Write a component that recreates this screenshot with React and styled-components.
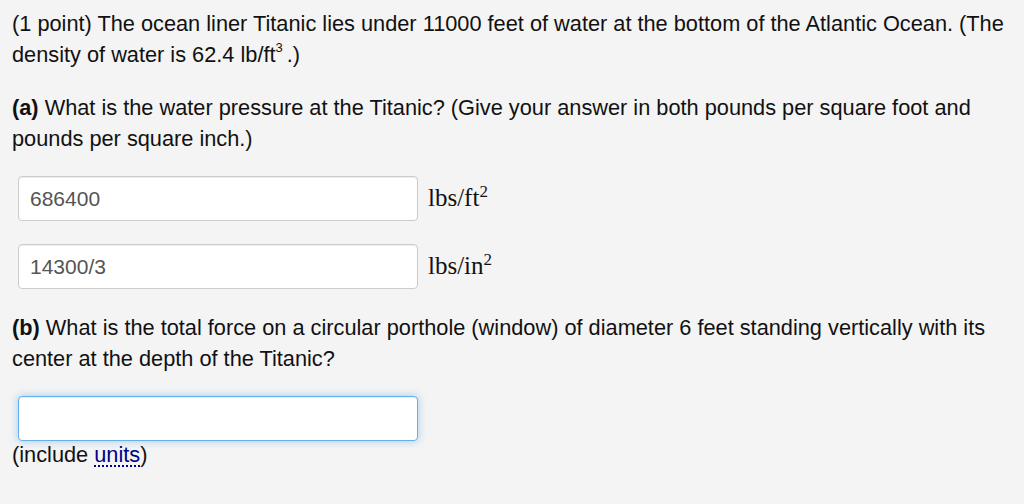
import React from 'react';
import styled, { createGlobalStyle } from 'styled-components';

const GlobalStyle = createGlobalStyle`
  html, body {
    margin: 0;
    padding: 0;
    background: #f4f4f4;
  }
  body {
    font-family: "Liberation Sans", Arial, Helvetica, sans-serif;
    color: #111;
  }
`;

const Problem = styled.div`
  padding: 8px 12px;
  font-size: 21.75px;
  line-height: 31px;
`;

const P = styled.p`
  margin: 0 0 22px 0;
`;

const Sup = styled.sup`
  font-size: 13px;
  line-height: 0;
  vertical-align: 10px;
  margin-right: 4px;
`;

const AnswerRow = styled.div`
  display: flex;
  align-items: flex-start;
  margin: 0 0 ${p => (p.$last ? 0 : 23)}px 6px;
`;

const Input = styled.input`
  box-sizing: border-box;
  width: 400px;
  height: 45px;
  padding: 0 11px;
  border: 1px solid ${p => (p.$focus ? '#66afe9' : '#ccc')};
  border-radius: 4px;
  background: #fff;
  font-family: "Liberation Sans", Arial, Helvetica, sans-serif;
  font-size: 21px;
  color: #555;
  outline: none;
  box-shadow: ${p =>
    p.$focus
      ? 'inset 0 1px 1px rgba(0,0,0,.075), 0 0 8px rgba(102,175,233,.6)'
      : 'inset 0 1px 1px rgba(0,0,0,.075)'};
`;

const Unit = styled.span`
  font-family: "Liberation Serif", "Times New Roman", serif;
  font-size: 25px;
  line-height: 26px;
  margin-left: 10px;
  padding-top: 9px;
  color: #111;
`;

const UnitSup = styled.sup`
  font-size: 17px;
  line-height: 0;
  vertical-align: 9px;
`;

const Hint = styled.div`
  margin-top: -2px;
`;

const UnitsLink = styled.a`
  color: #00008b;
  text-decoration: none;
  border-bottom: 2px dotted #00008b;
  line-height: 21px;
  display: inline-block;
`;

export default function App() {
  return (
    <>
      <GlobalStyle />
      <Problem>
        <P>
          (1 point) The ocean liner Titanic lies under 11000 feet of water at the bottom of the Atlantic Ocean. (The
          density of water is 62.4 lb/ft<Sup>3</Sup>.)
        </P>
        <P>
          <b>(a)</b> What is the water pressure at the Titanic? (Give your answer in both pounds per square foot and
          pounds per square inch.)
        </P>
        <AnswerRow>
          <Input defaultValue="686400" />
          <Unit>
            lbs/ft<UnitSup>2</UnitSup>
          </Unit>
        </AnswerRow>
        <AnswerRow>
          <Input defaultValue="14300/3" />
          <Unit>
            lbs/in<UnitSup>2</UnitSup>
          </Unit>
        </AnswerRow>
        <P>
          <b>(b)</b> What is the total force on a circular porthole (window) of diameter 6 feet standing vertically with
          its center at the depth of the Titanic?
        </P>
        <AnswerRow $last>
          <Input $focus defaultValue="" />
        </AnswerRow>
        <Hint>
          (include <UnitsLink>units</UnitsLink>)
        </Hint>
      </Problem>
    </>
  );
}
